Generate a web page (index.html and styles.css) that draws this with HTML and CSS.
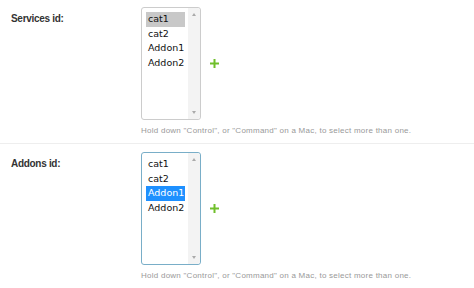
FILE: index.html
```html
<!DOCTYPE html>
<html lang="en">
<head>
    <meta charset="UTF-8">
    <title>Change service</title>
    <link rel="stylesheet" href="styles.css">
</head>
<body>
    <fieldset class="module">
        <div class="form-row">
            <label class="required">Services id:</label>
            <div class="field">
                <div class="related-widget">
                    <div class="listbox" role="listbox" aria-multiselectable="true">
                        <ul class="options">
                            <li class="selected">cat1</li>
                            <li>cat2</li>
                            <li>Addon1</li>
                            <li>Addon2</li>
                        </ul>
                        <div class="scrollbar"><span class="arrow up"></span><span class="arrow down"></span></div>
                    </div>
                    <a class="add-related" href="#" title="Add another">
                        <svg width="9" height="9" viewBox="0 0 9 9"><path d="M3.5 0h2v3.5H9v2H5.5V9h-2V5.5H0v-2h3.5z" fill="#70bf2b"/></svg>
                    </a>
                </div>
                <p class="help">Hold down "Control", or "Command" on a Mac, to select more than one.</p>
            </div>
        </div>

        <div class="form-row">
            <label class="required">Addons id:</label>
            <div class="field">
                <div class="related-widget">
                    <div class="listbox focused" role="listbox" aria-multiselectable="true">
                        <ul class="options">
                            <li>cat1</li>
                            <li>cat2</li>
                            <li class="selected">Addon1</li>
                            <li>Addon2</li>
                        </ul>
                        <div class="scrollbar"><span class="arrow up"></span><span class="arrow down"></span></div>
                    </div>
                    <a class="add-related" href="#" title="Add another">
                        <svg width="9" height="9" viewBox="0 0 9 9"><path d="M3.5 0h2v3.5H9v2H5.5V9h-2V5.5H0v-2h3.5z" fill="#70bf2b"/></svg>
                    </a>
                </div>
                <p class="help">Hold down "Control", or "Command" on a Mac, to select more than one.</p>
            </div>
        </div>
    </fieldset>
</body>
</html>
```

FILE: styles.css
```css
body {
    margin: 0;
    background-color: #fff;
    font-family: "Liberation Sans", Arial, sans-serif;
    color: #333;
}

.module {
    margin: 0;
    padding: 0;
    border: none;
}

.form-row {
    display: flex;
    padding: 7px 0 0 11px;
    border-bottom: 1px solid #eee;
}

.form-row + .form-row {
    padding-top: 8px;
}

label {
    width: 130px;
    padding-top: 6px;
    font-size: 10px;
    font-weight: bold;
    letter-spacing: -0.3px;
    color: #333;
}

.related-widget {
    display: flex;
    align-items: center;
}

.listbox {
    display: flex;
    width: 58px;
    height: 111px;
    border: 1px solid #ccc;
    border-radius: 3px;
    background-color: #fff;
}

.listbox.focused {
    border-color: #79aec8;
}

.options {
    flex: 1;
    margin: 0;
    padding: 4px 3px 0 4px;
    list-style: none;
    font-family: "DejaVu Sans", sans-serif;
    font-size: 9.5px;
    color: #111;
}

.options li {
    height: 14.5px;
    line-height: 14.5px;
    padding-left: 2px;
}

.options li.selected {
    background-color: #c8c8c8;
}

.focused .options li.selected {
    background-color: #1e90ff;
    color: #fff;
}

.scrollbar {
    position: relative;
    width: 12px;
    background-color: #f3f3f3;
    border-radius: 0 3px 3px 0;
}

.arrow {
    position: absolute;
    left: 4px;
    width: 0;
    height: 0;
    border-left: 2px solid transparent;
    border-right: 2px solid transparent;
}

.arrow.up {
    top: 5px;
    border-bottom: 3px solid #aaa;
}

.arrow.down {
    bottom: 5px;
    border-top: 3px solid #aaa;
}

.add-related {
    display: block;
    margin-left: 9px;
    line-height: 0;
}

.help {
    margin: 6px 0 0;
    padding-bottom: 8px;
    font-size: 8px;
    letter-spacing: 0.25px;
    color: #999;
}
```
